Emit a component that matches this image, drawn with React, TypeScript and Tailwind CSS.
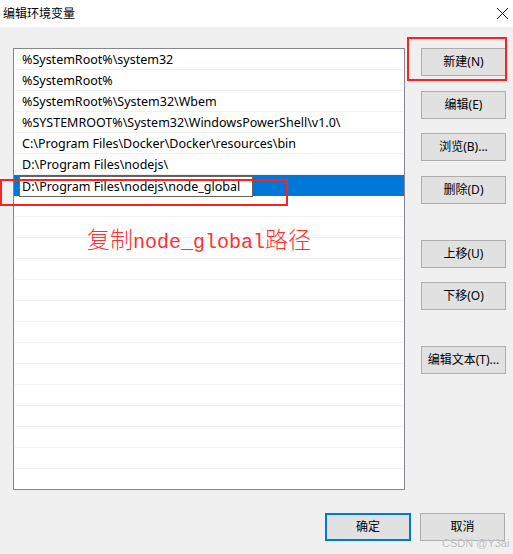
import React from "react";

const paths = [
  "%SystemRoot%\\system32",
  "%SystemRoot%",
  "%SystemRoot%\\System32\\Wbem",
  "%SYSTEMROOT%\\System32\\WindowsPowerShell\\v1.0\\",
  "C:\\Program Files\\Docker\\Docker\\resources\\bin",
  "D:\\Program Files\\nodejs\\",
];

const uiFont = { fontFamily: '"Noto Sans", "Noto Sans CJK SC", sans-serif' };

function Btn({ label, className = "" }: { label: string; className?: string }) {
  return (
    <div
      className={`flex h-[28px] w-[85px] items-center justify-center border border-[#adadad] bg-[#e1e1e1] text-[12px] text-black ${className}`}
    >
      {label}
    </div>
  );
}

export default function App() {
  const rows = Array.from({ length: 21 }, (_, i) => i);
  return (
    <div
      className="relative flex h-[554px] w-[513px] flex-col overflow-hidden bg-[#f0f0f0] text-[12px] text-black"
      style={uiFont}
    >
      {/* Title bar */}
      <div className="flex h-[27px] items-center justify-between bg-white pl-[3px] pr-[3px]">
        <span className="text-[12px] leading-none">编辑环境变量</span>
        <svg width="13" height="13" viewBox="0 0 13 13" className="mr-[1px]">
          <path d="M1 1 L12 12 M12 1 L1 12" stroke="#111" strokeWidth="1" fill="none" />
        </svg>
      </div>

      {/* Body */}
      <div className="flex pl-[13px] pt-[21px]">
        <div className="h-[442px] w-[392px] overflow-hidden border border-[#828790] bg-white text-[12.5px]">
          {rows.map((i) => {
            if (i === 6) {
              return (
                <div key={i} className="flex h-[21px] bg-[#0078d7] pl-[5px] pt-[1px]">
                  <div className="flex h-[21px] w-[234px] items-center border border-[#646464] bg-white pl-[2px] pt-[2px] leading-none">
                    D:\Program Files\nodejs\node_global
                  </div>
                </div>
              );
            }
            return (
              <div key={i} className="mx-[1px] flex h-[21px] items-center border-b border-[#f0f0f0] pl-[7px] pt-[2px] leading-none">
                {paths[i] ?? ""}
              </div>
            );
          })}
        </div>

        <div className="ml-[16px] flex flex-col">
          <Btn label="新建(N)" className="mt-[0px]" />
          <Btn label="编辑(E)" className="mt-[15px]" />
          <Btn label="浏览(B)..." className="mt-[14px]" />
          <Btn label="删除(D)" className="mt-[15px]" />
          <Btn label="上移(U)" className="mt-[36px]" />
          <Btn label="下移(O)" className="mt-[14px]" />
          <Btn label="编辑文本(T)..." className="mt-[36px]" />
        </div>
      </div>

      {/* Bottom buttons */}
      <div className="mt-[23px] flex justify-end gap-[9px] pr-[8px]">
        <div className="flex h-[28px] w-[86px] items-center justify-center border-2 border-[#0078d7] bg-[#e1e1e1]">
          确定
        </div>
        <div className="flex h-[28px] w-[85px] items-center justify-center border border-[#adadad] bg-[#e1e1e1]">
          取消
        </div>
      </div>

      {/* Annotations */}
      <div className="pointer-events-none absolute left-[407px] top-[37px] h-[44px] w-[100px] border-2 border-[#ff2020]" />
      <div className="pointer-events-none absolute left-[0px] top-[179px] h-[27px] w-[288px] border-2 border-[#ff2020]" />
      <div className="pointer-events-none absolute left-[87px] top-[221px] flex items-baseline whitespace-nowrap text-[#ff3030]">
        <span className="text-[23px]" style={{ fontFamily: '"Noto Sans CJK SC", sans-serif', fontWeight: 300 }}>复制</span>
        <span className="text-[20px]" style={{ fontFamily: '"Liberation Mono", monospace' }}>node_global</span>
        <span className="text-[23px]" style={{ fontFamily: '"Noto Sans CJK SC", sans-serif', fontWeight: 300 }}>路径</span>
      </div>
      <div
        className="pointer-events-none absolute left-[442px] top-[538px] text-[11px] leading-none text-[#b8b8b8]"
        style={{ fontFamily: '"Liberation Sans", sans-serif', textShadow: "0 0 1px #fff" }}
      >
        CSDN @Y3ai
      </div>
    </div>
  );
}
